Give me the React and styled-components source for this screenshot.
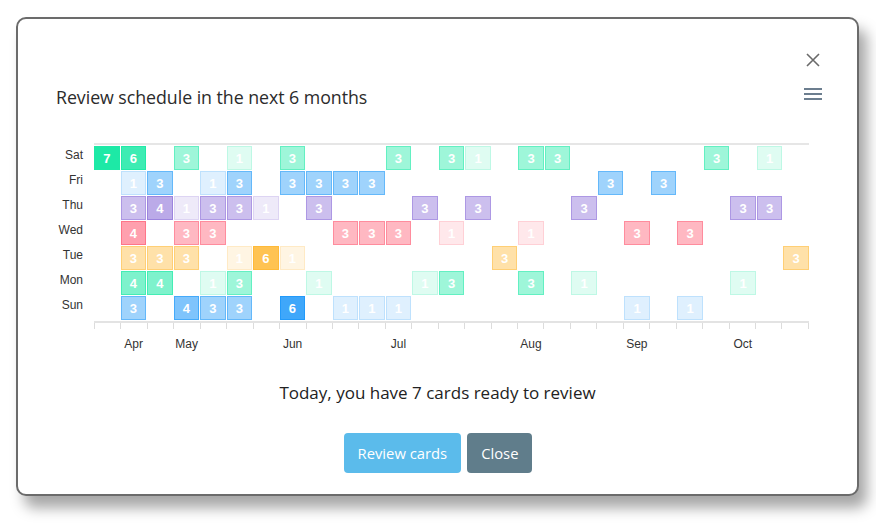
import React from 'react'
import styled, { createGlobalStyle } from 'styled-components'

const GlobalStyle = createGlobalStyle`
  html, body {
    margin: 0;
    padding: 0;
    background: #ffffff;
  }
  body {
    font-family: "Open Sans", "Noto Sans", sans-serif;
  }
`

const DAYS = ['Sat', 'Fri', 'Thu', 'Wed', 'Tue', 'Mon', 'Sun']

// base colour for each weekday row
const ROW_COLORS = [
  [29, 233, 166],
  [31, 152, 249],
  [136, 106, 215],
  [255, 89, 113],
  [255, 185, 54],
  [29, 233, 166],
  [31, 152, 249],
]

// week column -> count, per row
const DATA = [
  { 0: 7, 1: 6, 3: 3, 5: 1, 7: 3, 11: 3, 13: 3, 14: 1, 16: 3, 17: 3, 23: 3, 25: 1 },
  { 1: 1, 2: 3, 4: 1, 5: 3, 7: 3, 8: 3, 9: 3, 10: 3, 19: 3, 21: 3 },
  { 1: 3, 2: 4, 3: 1, 4: 3, 5: 3, 6: 1, 8: 3, 12: 3, 14: 3, 18: 3, 24: 3, 25: 3 },
  { 1: 4, 3: 3, 4: 3, 9: 3, 10: 3, 11: 3, 13: 1, 16: 1, 20: 3, 22: 3 },
  { 1: 3, 2: 3, 3: 3, 5: 1, 6: 6, 7: 1, 15: 3, 26: 3 },
  { 1: 4, 2: 4, 4: 1, 5: 3, 8: 1, 12: 1, 13: 3, 16: 3, 18: 1, 24: 1 },
  { 1: 3, 3: 4, 4: 3, 5: 3, 7: 6, 9: 1, 10: 1, 11: 1, 20: 1, 22: 1 },
]

const MONTHS = [
  { col: 1, label: 'Apr' },
  { col: 3, label: 'May' },
  { col: 7, label: 'Jun' },
  { col: 11, label: 'Jul' },
  { col: 16, label: 'Aug' },
  { col: 20, label: 'Sep' },
  { col: 24, label: 'Oct' },
]

const WEEKS = 27
const MAX = 7

function App() {
  const cells = []
  DATA.forEach((row, r) => {
    Object.entries(row).forEach(([c, n]) => {
      const [red, green, blue] = ROW_COLORS[r]
      cells.push(
        <Cell
          key={`${r}-${c}`}
          style={{
            gridRow: r + 1,
            gridColumn: Number(c) + 1,
            background: `rgba(${red}, ${green}, ${blue}, ${n / MAX})`,
            boxShadow: `inset 0 0 0 1px rgba(${red}, ${green}, ${blue}, ${Math.min(1, n / MAX + 0.025)})`,
          }}
        >
          {n}
        </Cell>
      )
    })
  })

  return (
    <Page>
      <GlobalStyle />
      <Dialog>
        <CloseIcon aria-label="close">
          <svg width="14" height="14" viewBox="0 0 14 14">
            <path d="M1 1 L13 13 M13 1 L1 13" stroke="#6a6a6a" strokeWidth="1.6" fill="none" />
          </svg>
        </CloseIcon>

        <Header>
          <Title>Review schedule in the next 6 months</Title>
          <MenuIcon aria-label="menu">
            <svg width="18" height="14" viewBox="0 0 18 14">
              <path d="M0 2 H18 M0 7 H18 M0 12 H18" stroke="#6c7e8f" strokeWidth="2" fill="none" />
            </svg>
          </MenuIcon>
        </Header>

        <Chart>
          <DayLabels>
            {DAYS.map((d) => (
              <DayLabel key={d}>{d}</DayLabel>
            ))}
          </DayLabels>
          <Plot>
            <Grid>{cells}</Grid>
            <Ticks>
              {Array.from({ length: WEEKS }).map((_, i) => (
                <Tick key={i} $last={i === WEEKS - 1} />
              ))}
            </Ticks>
            <MonthRow>
              {MONTHS.map((m) => (
                <Month key={m.label} style={{ gridColumn: m.col + 1 }}>
                  {m.label}
                </Month>
              ))}
            </MonthRow>
          </Plot>
        </Chart>

        <Summary>Today, you have 7 cards ready to review</Summary>

        <Buttons>
          <Button $color="#5bbbeb">Review cards</Button>
          <Button $color="#607d8b">Close</Button>
        </Buttons>
      </Dialog>
    </Page>
  )
}

const Page = styled.div`
  padding: 17px 0 0 16px;
  width: 876px;
  height: 530px;
  box-sizing: border-box;
`

const Dialog = styled.div`
  position: relative;
  width: 843px;
  box-sizing: border-box;
  border: 2px solid #6b6b6b;
  border-radius: 10px;
  background: #fff;
  box-shadow: 8px 12px 14px rgba(0, 0, 0, 0.35);
  padding: 66px 38px 21px 38px;
`

const CloseIcon = styled.div`
  position: absolute;
  top: 34px;
  right: 37px;
  width: 14px;
  height: 14px;
  display: flex;
`

const Header = styled.div`
  display: flex;
  align-items: center;
  justify-content: space-between;
  height: 24px;
  margin-right: -3px;
`

const Title = styled.div`
  font-size: 17.8px;
  color: #2b2b2b;
  letter-spacing: -0.05px;
`

const MenuIcon = styled.div`
  display: flex;
  margin-top: -7px;
`

const Chart = styled.div`
  display: flex;
  margin-top: 34px;
`

const DayLabels = styled.div`
  width: 38px;
  padding-top: 1px;
  padding-right: 11px;
  box-sizing: border-box;
  display: grid;
  grid-template-rows: repeat(7, 25px);
  align-content: start;
`

const DayLabel = styled.div`
  font-family: "Liberation Sans", Arial, sans-serif;
  font-size: 12px;
  color: #333;
  text-align: right;
  line-height: 22px;
`

const Plot = styled.div`
  width: 715px;
`

const Grid = styled.div`
  display: grid;
  grid-template-columns: repeat(27, 1fr);
  grid-template-rows: repeat(7, 24px);
  gap: 1px;
  border-top: 2px solid #e6e6e6;
  border-bottom: 2px solid #e3e3e3;
  padding: 1px 0 1px 0;
`

const Cell = styled.div`
  display: flex;
  align-items: center;
  justify-content: center;
  color: #fff;
  font-family: "Liberation Sans", Arial, sans-serif;
  font-weight: bold;
  font-size: 13px;
`

const Ticks = styled.div`
  display: flex;
  height: 6px;
`

const Tick = styled.div`
  flex: 1;
  border-left: 1px solid #dcdcdc;
  border-right: ${(p) => (p.$last ? '1px solid #dcdcdc' : 'none')};
`

const MonthRow = styled.div`
  display: grid;
  grid-template-columns: repeat(27, 1fr);
  margin-top: 8px;
  height: 14px;
`

const Month = styled.div`
  grid-row: 1;
  text-align: center;
  white-space: nowrap;
  font-family: "Liberation Sans", Arial, sans-serif;
  font-size: 12px;
  line-height: 14px;
  color: #333;
`

const Summary = styled.div`
  margin-top: 30px;
  text-align: center;
  font-size: 17px;
  line-height: 24px;
  color: #222;
`

const Buttons = styled.div`
  display: flex;
  justify-content: center;
  gap: 6px;
  margin-top: 28px;
  padding-left: 1px;
`

const Button = styled.button`
  height: 40px;
  padding: 0 14px;
  border: none;
  border-radius: 4px;
  background: ${(p) => p.$color};
  color: #fff;
  font-family: "Open Sans", "Noto Sans", sans-serif;
  font-size: 14.8px;
`

export default App
